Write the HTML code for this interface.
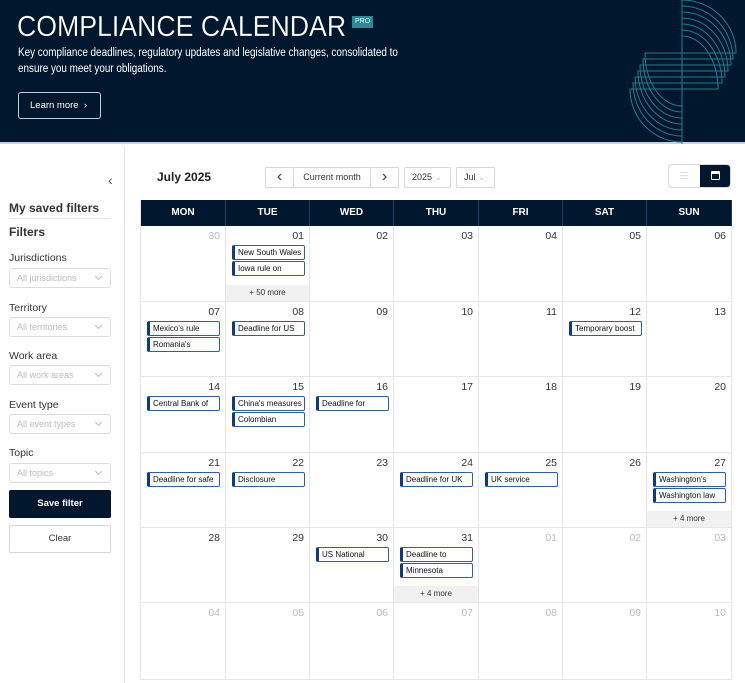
<!DOCTYPE html>
<html><head><meta charset="utf-8"><style>
*{box-sizing:border-box;margin:0;padding:0}
body{width:745px;height:683px;overflow:hidden;background:#fff;font-family:"Liberation Sans",sans-serif;color:#222;position:relative}
.hdr{position:absolute;left:0;top:0;width:745px;height:144px;background:#00172e;border-bottom:2px solid #c9d3dc}
.title{position:absolute;left:17px;top:11px;font-size:29px;color:#fff;font-weight:normal;white-space:nowrap;transform:scaleX(0.92);transform-origin:left;-webkit-text-stroke:0.2px #00172e}
.pro{position:absolute;left:352px;top:16px;background:#2b8a9a;color:#dff;font-size:7px;padding:2px 3px;line-height:8px}
.sub{position:absolute;left:18px;top:45px;color:#fff;font-size:11.5px;line-height:16px;width:450px;transform:scaleX(0.86);transform-origin:left}
.lm{position:absolute;left:18px;top:92px;width:83px;height:27px;border:1px solid #c8cdd3;border-radius:3px;color:#fff;font-size:9.5px;line-height:25px;padding-left:11px}
.side{position:absolute;left:0;top:146px;width:125px;height:537px;border-right:1px solid #e2e2e2}
.a{position:absolute}
.lbl{font-size:10.5px;color:#333;left:9px}
.sel{left:9px;width:102px;height:20px;border:1px solid #dcdcdc;border-radius:3px;font-size:9px;color:#bbb;line-height:18px;padding-left:7px}
.sel:after{content:"";position:absolute;right:9px;top:5px;width:4px;height:4px;border-right:1px solid #bbb;border-bottom:1px solid #bbb;transform:rotate(45deg)}
.btn{position:absolute;border:1px solid #d8d8d8;border-radius:2px;font-size:9.5px;text-align:center;color:#333;background:#fff}
.cal{position:absolute;left:140px;top:200px;width:591px;display:grid;grid-template-columns:85px 84px 84px 85px 84px 84px 85px;grid-template-rows:26px 76px 75px 76px 75px 75px 77px;border-left:1px solid #e6e6e6}
.h{background:#00172e;color:#fff;font-weight:bold;font-size:10px;text-align:center;line-height:26px;border-right:1px solid #1d3b63}
.c{border-right:1px solid #e6e6e6;border-bottom:1px solid #e6e6e6;position:relative}
.n{position:absolute;right:5px;top:4px;font-size:10.5px;color:#333}
.o .n{color:#bbb}
.e{position:absolute;left:6px;width:73px;height:15px;border:1px solid #2d5ea8;border-left:3px solid #0d3a85;border-radius:2px;font-size:8px;line-height:13px;padding-left:3px;color:#111;background:#fff;white-space:nowrap;overflow:hidden}
.m{position:absolute;left:0;right:0;bottom:0;height:16px;background:#f1f1f1;font-size:8px;text-align:center;line-height:16px;color:#333}
</style></head><body>
<div class="hdr">
<div class="title">COMPLIANCE CALENDAR</div>
<div class="pro">PRO</div>
<div class="sub">Key compliance deadlines, regulatory updates and legislative changes, consolidated to ensure you meet your obligations.</div>
<div class="lm">Learn more &nbsp;›</div>
<svg class="a" style="left:0;top:0" width="745" height="144" fill="none" stroke="#1e7f8c" stroke-width="1">
<line x1="682" y1="0" x2="682" y2="144"/>
<path d="M682 0A54 53 0 0 1 736 53L645 53A37 53 0 0 0 682 106"/>
<path d="M682 6A51 53 0 0 1 733 59L643 59A39 53 0 0 0 682 112"/>
<path d="M682 12A49 53 0 0 1 731 65L640 65A42 53 0 0 0 682 118"/>
<path d="M682 18A46 53 0 0 1 728 71L638 71A44 53 0 0 0 682 124"/>
<path d="M682 24A43 53 0 0 1 725 77L635 77A47 53 0 0 0 682 130"/>
<path d="M682 30A40 53 0 0 1 722 83L633 83A49 53 0 0 0 682 136"/>
<path d="M682 36A36 53 0 0 1 718 89L630 89A52 53 0 0 0 682 142"/>
</svg>
</div>
<div class="side"></div>
<div class="a" style="left:108px;top:172px;font-size:14px;color:#555">‹</div>
<div class="a" style="left:9px;top:201px;font-size:12px;font-weight:bold;color:#333">My saved filters</div>
<div class="a" style="left:9px;top:218px;width:102px;height:1px;background:#e4e4e4"></div>
<div class="a" style="left:9px;top:225px;font-size:12px;font-weight:bold;color:#333">Filters</div>
<div class="a lbl" style="top:252px">Jurisdictions</div><div class="a sel" style="top:268px">All jurisdictions</div>
<div class="a lbl" style="top:302px">Territory</div><div class="a sel" style="top:317px">All territories</div>
<div class="a lbl" style="top:350px">Work area</div><div class="a sel" style="top:365px">All work areas</div>
<div class="a lbl" style="top:399px">Event type</div><div class="a sel" style="top:414px">All event types</div>
<div class="a lbl" style="top:447px">Topic</div><div class="a sel" style="top:463px">All topics</div>
<div class="btn" style="left:9px;top:490px;width:102px;height:28px;background:#00172e;color:#fff;font-weight:bold;line-height:26px;border-color:#00172e">Save filter</div>
<div class="btn" style="left:9px;top:525px;width:102px;height:28px;line-height:26px">Clear</div>

<div class="a" style="left:157px;top:170px;font-size:12px;font-weight:bold;color:#222">July 2025</div>
<div class="btn" style="left:265px;top:167px;width:29px;height:21px;font-size:16px;line-height:17px">‹</div>
<div class="btn" style="left:293px;top:167px;width:78px;height:21px;line-height:19px;font-size:9px">Current month</div>
<div class="btn" style="left:370px;top:167px;width:29px;height:21px;font-size:16px;line-height:17px">›</div>
<div class="btn" style="left:404px;top:167px;width:47px;height:21px;line-height:19px;font-size:9px;text-align:left;padding-left:7px">2025 <span style="color:#bbb">⌄</span></div>
<div class="btn" style="left:456px;top:167px;width:39px;height:21px;line-height:19px;font-size:9px;text-align:left;padding-left:7px">Jul <span style="color:#bbb">⌄</span></div>
<div class="btn" style="left:668px;top:164px;width:63px;height:24px;border-radius:4px;overflow:hidden">
<div class="a" style="left:31px;top:0;width:31px;height:22px;background:#00172e"></div>
<div class="a" style="left:11px;top:7px;width:8px;height:7px;border-top:1px solid #ddd;border-bottom:1px solid #ddd"><div style="margin-top:2px;height:1px;background:#ddd"></div></div>
<div class="a" style="left:42px;top:6px;width:9px;height:9px;border:1.5px solid #fff;border-radius:1px;border-top-width:3px"></div>
</div>

<div class="cal">
<div class="h">MON</div><div class="h">TUE</div><div class="h">WED</div><div class="h">THU</div><div class="h">FRI</div><div class="h">SAT</div><div class="h">SUN</div>
<div class="c o"><span class="n">30</span></div>
<div class="c"><span class="n">01</span><div class="e" style="top:19px">New South Wales</div><div class="e" style="top:35px">Iowa rule on</div><div class="m">+ 50 more</div></div>
<div class="c"><span class="n">02</span></div><div class="c"><span class="n">03</span></div><div class="c"><span class="n">04</span></div><div class="c"><span class="n">05</span></div><div class="c"><span class="n">06</span></div>
<div class="c"><span class="n">07</span><div class="e" style="top:19px">Mexico's rule</div><div class="e" style="top:35px">Romania's</div></div>
<div class="c"><span class="n">08</span><div class="e" style="top:19px">Deadline for US</div></div>
<div class="c"><span class="n">09</span></div><div class="c"><span class="n">10</span></div><div class="c"><span class="n">11</span></div>
<div class="c"><span class="n">12</span><div class="e" style="top:19px">Temporary boost</div></div>
<div class="c"><span class="n">13</span></div>
<div class="c"><span class="n">14</span><div class="e" style="top:19px">Central Bank of</div></div>
<div class="c"><span class="n">15</span><div class="e" style="top:19px">China's measures</div><div class="e" style="top:35px">Colombian</div></div>
<div class="c"><span class="n">16</span><div class="e" style="top:19px">Deadline for</div></div>
<div class="c"><span class="n">17</span></div><div class="c"><span class="n">18</span></div><div class="c"><span class="n">19</span></div><div class="c"><span class="n">20</span></div>
<div class="c"><span class="n">21</span><div class="e" style="top:19px">Deadline for safe</div></div>
<div class="c"><span class="n">22</span><div class="e" style="top:19px">Disclosure</div></div>
<div class="c"><span class="n">23</span></div>
<div class="c"><span class="n">24</span><div class="e" style="top:19px">Deadline for UK</div></div>
<div class="c"><span class="n">25</span><div class="e" style="top:19px">UK service</div></div>
<div class="c"><span class="n">26</span></div>
<div class="c"><span class="n">27</span><div class="e" style="top:19px">Washington's</div><div class="e" style="top:35px">Washington law</div><div class="m">+ 4 more</div></div>
<div class="c"><span class="n">28</span></div><div class="c"><span class="n">29</span></div>
<div class="c"><span class="n">30</span><div class="e" style="top:19px">US National</div></div>
<div class="c"><span class="n">31</span><div class="e" style="top:19px">Deadline to</div><div class="e" style="top:35px">Minnesota</div><div class="m">+ 4 more</div></div>
<div class="c o"><span class="n">01</span></div><div class="c o"><span class="n">02</span></div><div class="c o"><span class="n">03</span></div>
<div class="c o"><span class="n">04</span></div><div class="c o"><span class="n">05</span></div><div class="c o"><span class="n">06</span></div><div class="c o"><span class="n">07</span></div><div class="c o"><span class="n">08</span></div><div class="c o"><span class="n">09</span></div><div class="c o"><span class="n">10</span></div>
</div>
</body></html>
